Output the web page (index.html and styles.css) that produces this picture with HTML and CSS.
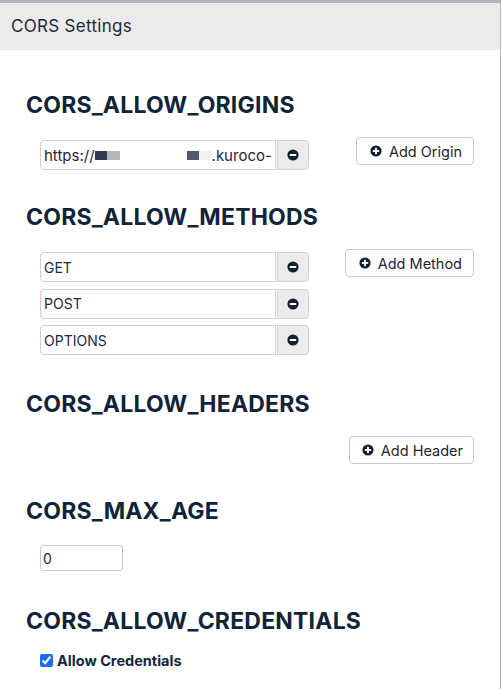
FILE: index.html
```html
<!DOCTYPE html>
<html lang="en">
<head>
<meta charset="utf-8">
<title>CORS Settings</title>
<link rel="stylesheet" href="styles.css">
</head>
<body>
<div class="modal">
  <div class="modal-header">CORS Settings</div>
  <div class="modal-body">
    <section class="section first">
      <h2 class="title">CORS_ALLOW_ORIGINS</h2>
      <div class="row">
        <div class="list">
          <div class="item">
            <div class="field url">https://<span class="mask m1"></span><span class="mask m2"></span><span class="gap"></span><span class="mask m3"></span><span class="mask m4"></span>.kuroco-</div>
            <button class="remove" type="button" aria-label="remove"><svg viewBox="0 0 12 12" width="12" height="12"><circle cx="6" cy="6" r="5.6" fill="#14202e"/><rect x="2.8" y="5" width="6.4" height="2" fill="#fff"/></svg></button>
          </div>
        </div>
        <button class="add" type="button"><svg viewBox="0 0 12 12" width="12" height="12"><circle cx="6" cy="6" r="5.6" fill="#14202e"/><rect x="2.8" y="5.1" width="6.4" height="1.8" fill="#fff"/><rect x="5.1" y="2.8" width="1.8" height="6.4" fill="#fff"/></svg>Add Origin</button>
      </div>
    </section>

    <section class="section">
      <h2 class="title">CORS_ALLOW_METHODS</h2>
      <div class="row">
        <div class="list">
          <div class="item">
            <div class="field">GET</div>
            <button class="remove" type="button" aria-label="remove"><svg viewBox="0 0 12 12" width="12" height="12"><circle cx="6" cy="6" r="5.6" fill="#14202e"/><rect x="2.8" y="5" width="6.4" height="2" fill="#fff"/></svg></button>
          </div>
          <div class="item">
            <div class="field">POST</div>
            <button class="remove" type="button" aria-label="remove"><svg viewBox="0 0 12 12" width="12" height="12"><circle cx="6" cy="6" r="5.6" fill="#14202e"/><rect x="2.8" y="5" width="6.4" height="2" fill="#fff"/></svg></button>
          </div>
          <div class="item">
            <div class="field">OPTIONS</div>
            <button class="remove" type="button" aria-label="remove"><svg viewBox="0 0 12 12" width="12" height="12"><circle cx="6" cy="6" r="5.6" fill="#14202e"/><rect x="2.8" y="5" width="6.4" height="2" fill="#fff"/></svg></button>
          </div>
        </div>
        <button class="add" type="button"><svg viewBox="0 0 12 12" width="12" height="12"><circle cx="6" cy="6" r="5.6" fill="#14202e"/><rect x="2.8" y="5.1" width="6.4" height="1.8" fill="#fff"/><rect x="5.1" y="2.8" width="1.8" height="6.4" fill="#fff"/></svg>Add Method</button>
      </div>
    </section>

    <section class="section section-headers">
      <h2 class="title">CORS_ALLOW_HEADERS</h2>
      <div class="row">
        <div class="list"></div>
        <button class="add add-header" type="button"><svg viewBox="0 0 12 12" width="12" height="12"><circle cx="6" cy="6" r="5.6" fill="#14202e"/><rect x="2.8" y="5.1" width="6.4" height="1.8" fill="#fff"/><rect x="5.1" y="2.8" width="1.8" height="6.4" fill="#fff"/></svg>Add Header</button>
      </div>
    </section>

    <section class="section section-age">
      <h2 class="title">CORS_MAX_AGE</h2>
      <div class="indent">
        <input class="small-input" type="text" value="0">
      </div>
    </section>

    <section class="section section-cred">
      <h2 class="title">CORS_ALLOW_CREDENTIALS</h2>
      <label class="check indent"><input type="checkbox" checked> Allow Credentials</label>
    </section>
  </div>
</div>
</body>
</html>
```

FILE: styles.css
```css
* { box-sizing: border-box; }
html, body { margin: 0; padding: 0; }
body {
  background: #b4b4ba;
  font-family: "Inter", "Noto Sans", sans-serif;
  color: #13263a;
}
.modal {
  margin-top: 3px;
  width: 500px;
  height: 686px;
  background: #fff;
  overflow: hidden;
}
.modal-header {
  height: 47px;
  background: #ebebeb;
  padding-left: 11px;
  display: flex;
  align-items: center;
  font-size: 17px;
  letter-spacing: 0.3px;
  color: #1c2b3a;
  padding-bottom: 1px;
}
.modal-body {
  padding: 42px 26px 0 26px;
}
.section { margin-top: 34px; }
.section.first { margin-top: 0; }
.section-headers { margin-top: 36px; }
.section-age .title { margin-bottom: 21px; }
.section-cred { margin-top: 37px; }
.section-cred .title { margin-bottom: 18px; }
.title {
  margin: 0 0 19px 0;
  font-size: 23px;
  line-height: 26px;
  font-weight: 700;
  color: #0f2438;
  letter-spacing: 0.2px;
}
.row {
  display: flex;
  justify-content: space-between;
  align-items: flex-start;
}
.list {
  margin-left: 14px;
  margin-top: 3px;
  display: flex;
  flex-direction: column;
  gap: 6.5px;
}
.item {
  display: flex;
  width: 269px;
  height: 30px;
}
.field {
  flex: 1;
  border: 1px solid #cfcfcf;
  border-radius: 4px 0 0 4px;
  padding: 0 3px;
  display: flex;
  align-items: center;
  font-size: 14px;
  color: #1b2a3a;
  white-space: nowrap;
  overflow: hidden;
}
.field.url { font-size: 15px; }
.mask { display: inline-block; width: 12.5px; height: 9px; }
.m1 { background: #2d3c4f; }
.m2 { background: #b3b7bd; }
.m3 { background: #4e5a67; }
.m4 { background: #f0f1f2; }
.gap { display: inline-block; width: 67px; }
.remove {
  width: 32px;
  margin-left: 1px;
  border: 1px solid #cfcfcf;
  border-radius: 0 4px 4px 0;
  background: #ebebeb;
  padding: 0;
  display: flex;
  align-items: center;
  justify-content: center;
}
.add {
  height: 28px;
  padding: 0 11px 0 13px;
  border: 1px solid #c8c8c8;
  border-radius: 4px;
  background: #fff;
  font-family: inherit;
  font-size: 14.5px;
  color: #1d2530;
  display: flex;
  align-items: center;
  gap: 7px;
}
.add-header { padding: 0 10px 0 12px; }
.indent { margin-left: 14px; }
.small-input {
  width: 83px;
  height: 26px;
  border: 1px solid #c9c9c9;
  border-radius: 3px;
  padding: 0 2px;
  font-family: inherit;
  font-size: 14px;
  color: #1b2a3a;
}
.check {
  display: flex;
  align-items: center;
  gap: 4px;
  font-size: 14.5px;
  font-weight: 700;
  color: #13263a;
}
.check input {
  margin: 0;
  width: 13px;
  height: 13px;
  accent-color: #1a6ef5;
}
```
